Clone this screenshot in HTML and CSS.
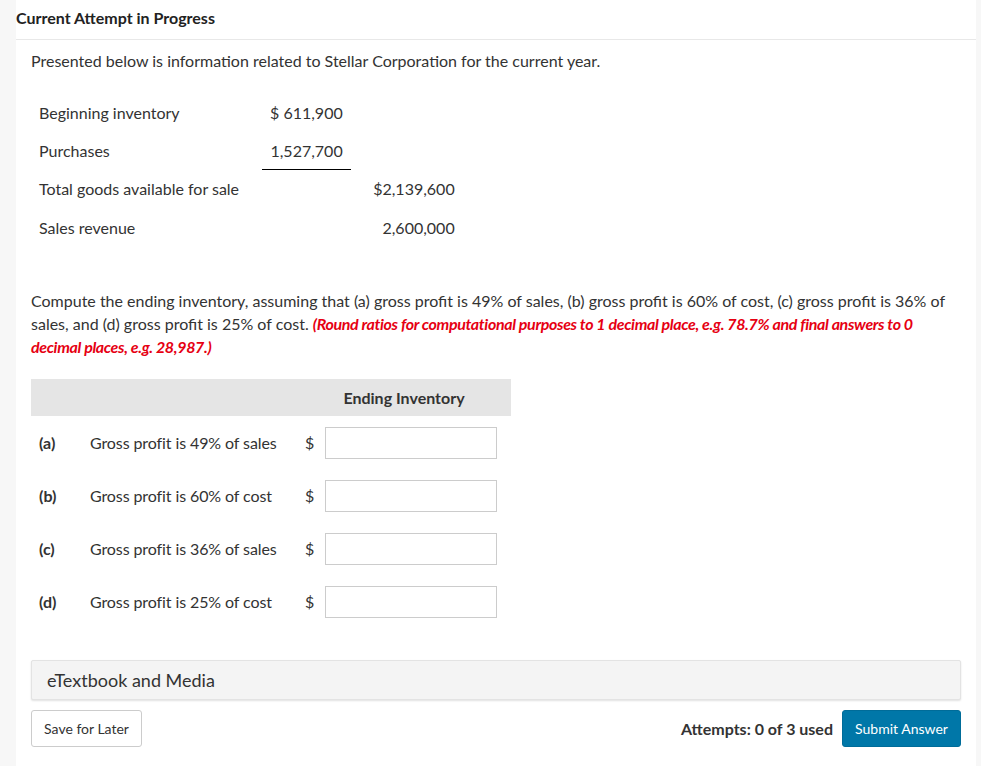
FILE: index.html
```html
<!DOCTYPE html>
<html lang="en">
<head>
    <meta charset="UTF-8">
    <meta name="viewport" content="width=device-width, initial-scale=1.0">
    <title>Current Attempt in Progress</title>
    <link rel="stylesheet" href="styles.css">
</head>
<body>
    <div class="panel">
        <h2 class="attempt-title">Current Attempt in Progress</h2>
        <div class="question">
            <p class="intro">Presented below is information related to Stellar Corporation for the current year.</p>

            <table class="data-table">
                <tr>
                    <td class="label">Beginning inventory</td>
                    <td class="amount">$ 611,900</td>
                    <td class="total"></td>
                </tr>
                <tr>
                    <td class="label">Purchases</td>
                    <td class="amount underline">1,527,700</td>
                    <td class="total"></td>
                </tr>
                <tr>
                    <td class="label">Total goods available for sale</td>
                    <td class="amount"></td>
                    <td class="total">$2,139,600</td>
                </tr>
                <tr>
                    <td class="label">Sales revenue</td>
                    <td class="amount"></td>
                    <td class="total">2,600,000</td>
                </tr>
            </table>

            <p class="prompt">Compute the ending inventory, assuming that (a) gross profit is 49% of sales, (b) gross profit is 60% of cost, (c) gross profit is 36% of sales, and (d) gross profit is 25% of cost. <em class="hint">(Round ratios for computational purposes to 1 decimal place, e.g. 78.7% and final answers to 0 decimal places, e.g. 28,987.)</em></p>

            <div class="answer-table">
                <div class="answer-head">
                    <span class="head-cell">Ending Inventory</span>
                </div>
                <div class="answer-row">
                    <span class="part">(a)</span>
                    <span class="desc">Gross profit is 49% of sales</span>
                    <span class="cur">$</span>
                    <span class="field"><input type="text"></span>
                </div>
                <div class="answer-row">
                    <span class="part">(b)</span>
                    <span class="desc">Gross profit is 60% of cost</span>
                    <span class="cur">$</span>
                    <span class="field"><input type="text"></span>
                </div>
                <div class="answer-row">
                    <span class="part">(c)</span>
                    <span class="desc">Gross profit is 36% of sales</span>
                    <span class="cur">$</span>
                    <span class="field"><input type="text"></span>
                </div>
                <div class="answer-row">
                    <span class="part">(d)</span>
                    <span class="desc">Gross profit is 25% of cost</span>
                    <span class="cur">$</span>
                    <span class="field"><input type="text"></span>
                </div>
            </div>

            <div class="media-bar">eTextbook and Media</div>

            <div class="actions">
                <button type="button" class="btn-save">Save for Later</button>
                <div class="submit-group">
                    <span class="attempts">Attempts: 0 of 3 used</span>
                    <button type="button" class="btn-submit">Submit Answer</button>
                </div>
            </div>
        </div>
    </div>
</body>
</html>
```

FILE: styles.css
```css
body {
    margin: 0;
    background-color: #f7f7f7;
    font-family: Lato, "Open Sans", Arial, sans-serif;
    color: #333;
}

.panel {
    margin-left: 16px;
    width: 960px;
    min-height: 766px;
    background-color: #fff;
}

.attempt-title {
    margin: 0;
    height: 39px;
    line-height: 36px;
    font-size: 16px;
    font-weight: bold;
    color: #222;
    border-bottom: 1px solid #e8e8e8;
}

.question {
    padding: 0 15px;
}

.intro {
    margin: 0;
    padding-top: 10px;
    line-height: 22px;
    font-size: 16px;
}

.data-table {
    margin-top: 21px;
    border-collapse: collapse;
    font-size: 16px;
}

.data-table td {
    height: 38px;
    padding: 0 8px;
    white-space: nowrap;
}

.data-table .label {
    width: 215px;
}

.data-table .amount {
    width: 72px;
    text-align: right;
}

.data-table .total {
    width: 96px;
    text-align: right;
}

.data-table .underline {
    border-bottom: 1px solid #000;
}

.prompt {
    margin: 43px 0 0;
    line-height: 23px;
    font-size: 16px;
}

.hint {
    color: #e60012;
    font-weight: bold;
    letter-spacing: -0.35px;
}

.answer-table {
    margin-top: 21px;
    width: 480px;
    font-size: 16px;
}

.answer-head {
    display: flex;
    justify-content: flex-end;
    height: 37px;
    align-items: center;
    background-color: #e5e5e5;
}

.head-cell {
    width: 214px;
    text-align: center;
    font-weight: bold;
}

.answer-row {
    display: flex;
    align-items: center;
    height: 53px;
}

.part {
    width: 43px;
    padding-left: 8px;
    font-weight: bold;
}

.desc {
    width: 207px;
    padding-left: 8px;
    letter-spacing: -0.1px;
}

.cur {
    width: 20px;
    padding-left: 8px;
}

.field {
    width: 186px;
}

.field input {
    box-sizing: border-box;
    width: 172px;
    height: 32px;
    border: 1px solid #ccc;
    font-family: inherit;
    font-size: 16px;
}

.media-bar {
    margin-top: 32px;
    height: 38px;
    line-height: 38px;
    padding-left: 15px;
    font-size: 18px;
    background-color: #f4f4f4;
    border: 1px solid #e3e3e3;
    border-radius: 2px;
    box-shadow: 0 1px 2px rgba(0, 0, 0, 0.12);
}

.actions {
    display: flex;
    justify-content: space-between;
    align-items: center;
    margin-top: 10px;
}

.actions button {
    height: 37px;
    font-family: inherit;
    font-size: 14px;
    border-radius: 3px;
    cursor: pointer;
}

.btn-save {
    width: 111px;
    background-color: #fff;
    color: #333;
    border: 1px solid #ccc;
}

.submit-group {
    display: flex;
    align-items: center;
    gap: 9px;
}

.attempts {
    font-size: 16px;
    font-weight: bold;
}

.btn-submit {
    width: 119px;
    background-color: #0077a8;
    color: #fff;
    border: 1px solid #006c99;
}
```
